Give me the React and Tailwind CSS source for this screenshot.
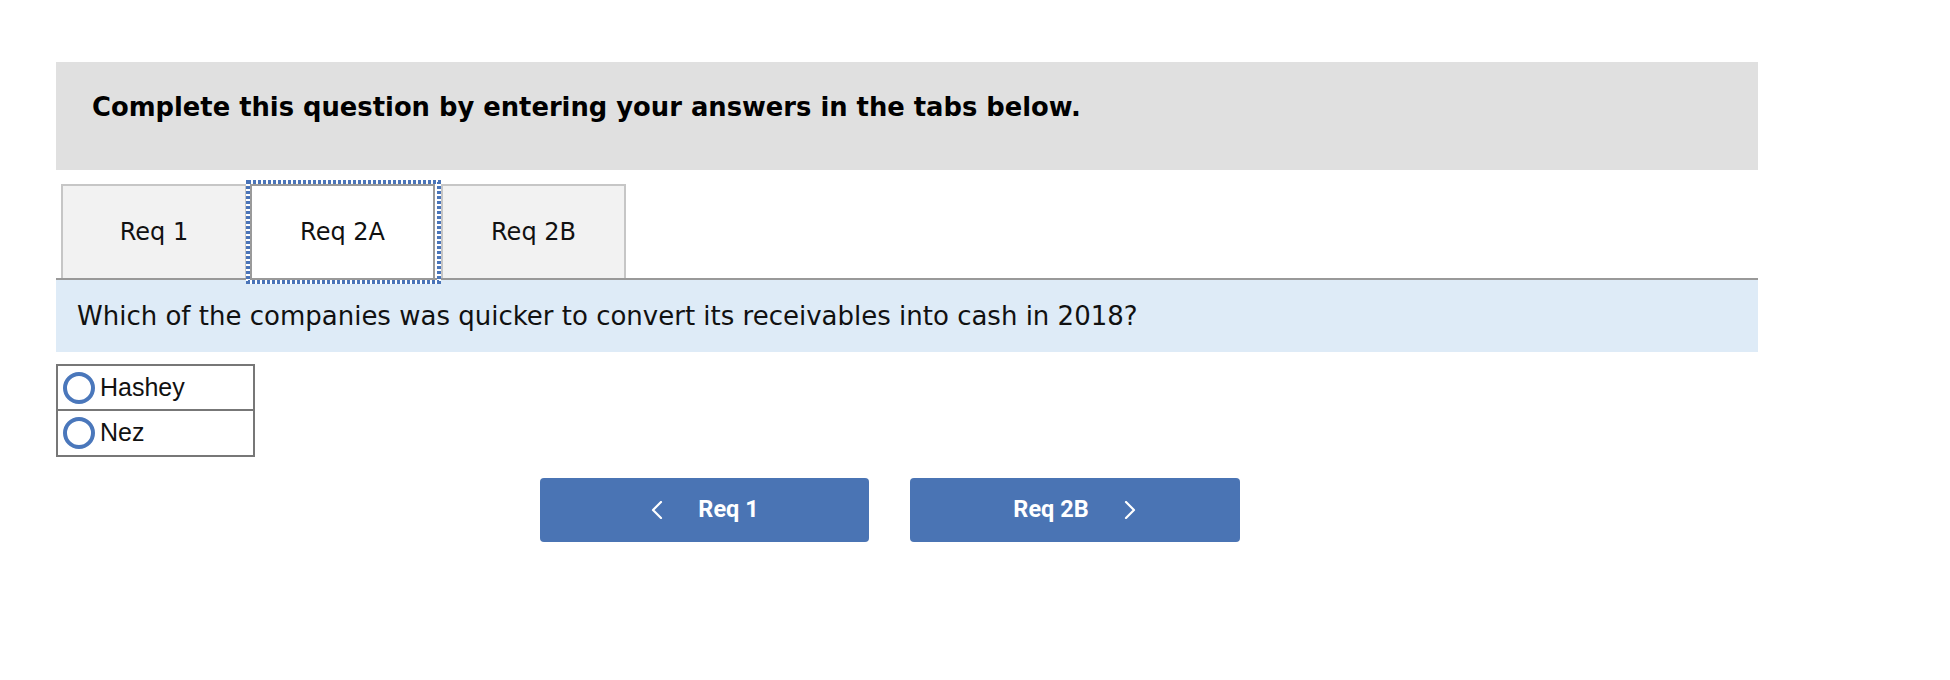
import React from "react";

function Chevron({ dir }) {
  return (
    <svg width="14" height="18" viewBox="0 0 14 18" fill="none">
      {dir === "left" ? (
        <polyline points="11,1 3,9 11,17" stroke="white" strokeWidth="2.2" strokeLinecap="round" strokeLinejoin="round" />
      ) : (
        <polyline points="3,1 11,9 3,17" stroke="white" strokeWidth="2.2" strokeLinecap="round" strokeLinejoin="round" />
      )}
    </svg>
  );
}

function Radio() {
  return (
    <svg width="32" height="32" viewBox="0 0 32 32" className="shrink-0">
      <circle cx="16" cy="16" r="14" fill="white" stroke="#4a77bb" strokeWidth="4" />
    </svg>
  );
}

export default function App() {
  const sans = { fontFamily: '"DejaVu Sans", Verdana, sans-serif' };
  return (
    <div className="w-[1950px] h-[680px] bg-white pt-[62px] pl-[56px]">
      <div className="w-[1702px]">
        <div className="h-[108px] bg-[#e0e0e0] pl-[36px] pt-[28px]">
          <div className="text-[25.8px] font-bold text-black leading-[34px]" style={sans}>
            Complete this question by entering your answers in the tabs below.
          </div>
        </div>

        <div className="mt-[14px] flex pl-[5px] border-b-2 border-[#999999]">
          <div className="w-[186px] h-[94px] bg-[#f2f2f2] border-2 border-b-0 border-[#c6c6c6] flex items-center justify-center text-[24px] text-[#111]" style={sans}>
            Req 1
          </div>
          <div className="relative ml-[3px] w-[185px] h-[94px] bg-white border-2 border-b-0 border-[#9a9a9a] flex items-center justify-center text-[24px] text-[#111]" style={sans}>
            Req 2A
            <svg className="absolute left-[-6px] top-[-6px] pointer-events-none" width="195" height="104" viewBox="0 0 195 104" fill="none">
              <rect x="2" y="2" width="191" height="100" stroke="white" strokeWidth="4" />
              <rect x="2" y="2" width="191" height="100" stroke="#4a74b8" strokeWidth="4" strokeDasharray="3 2" />
            </svg>
          </div>
          <div className="ml-[6px] w-[185px] h-[94px] bg-[#f2f2f2] border-2 border-b-0 border-[#c6c6c6] flex items-center justify-center text-[24px] text-[#111]" style={sans}>
            Req 2B
          </div>
        </div>

        <div className="h-[72px] bg-[#deebf7] pl-[21px] flex items-center text-[26px] text-[#111]" style={sans}>
          Which of the companies was quicker to convert its receivables into cash in 2018?
        </div>

        <div className="mt-[12px] w-[199px] border-2 border-[#777777]" style={{ fontFamily: '"Liberation Sans", Arial, sans-serif' }}>
          <div className="h-[45px] flex items-center gap-[5px] pl-[5px] text-[25px] text-[#111] border-b-2 border-[#777777]">
            <Radio />
            <span>Hashey</span>
          </div>
          <div className="h-[44px] flex items-center gap-[5px] pl-[5px] text-[25px] text-[#111]">
            <Radio />
            <span>Nez</span>
          </div>
        </div>

        <div className="mt-[21px] flex pl-[484px] gap-[41px]" style={{ fontFamily: 'Roboto, "Liberation Sans", sans-serif' }}>
          <div className="w-[329px] h-[64px] rounded-[4px] bg-[#4a74b4] flex items-center justify-center gap-[34px] text-white text-[23.5px] font-bold">
            <Chevron dir="left" />
            <span>Req 1</span>
          </div>
          <div className="w-[330px] h-[64px] rounded-[4px] bg-[#4a74b4] flex items-center justify-center gap-[34px] text-white text-[23.5px] font-bold">
            <span>Req 2B</span>
            <Chevron dir="right" />
          </div>
        </div>
      </div>
    </div>
  );
}
